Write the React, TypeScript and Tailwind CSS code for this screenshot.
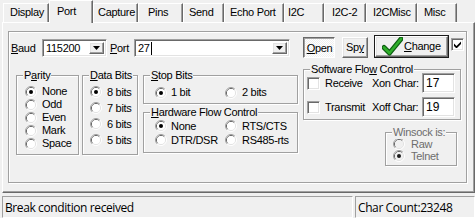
import React from "react";

const ui =
  "font-['Liberation_Sans',Arial,sans-serif] text-[11px] tracking-[-0.3px] leading-[13px] text-black";
const sunken =
  "border border-t-[#a0a0a0] border-l-[#a0a0a0] border-r-white border-b-white shadow-[inset_1px_1px_0_#696969,inset_-1px_-1px_0_#e3e3e3]";
const raised =
  "border border-t-white border-l-white border-r-[#696969] border-b-[#696969] shadow-[inset_-1px_-1px_0_#a0a0a0,inset_1px_1px_0_#e3e3e3] bg-[#f0f0f0]";

function Radio({ checked, disabled }: { checked?: boolean; disabled?: boolean }) {
  return (
    <svg width="12" height="12" viewBox="0 0 12 12" className="shrink-0">
      <path d="M2.11 9.89A5.5 5.5 0 0 1 9.89 2.11" fill="none" stroke="#a0a0a0" />
      <path d="M9.89 2.11A5.5 5.5 0 0 1 2.11 9.89" fill="none" stroke="#ffffff" />
      <path d="M2.82 9.18A4.5 4.5 0 0 1 9.18 2.82" fill="none" stroke="#696969" />
      <path d="M9.18 2.82A4.5 4.5 0 0 1 2.82 9.18" fill="none" stroke="#e3e3e3" />
      <circle cx="6" cy="6" r="4" fill={disabled ? "#f0f0f0" : "#ffffff"} />
      {checked && <circle cx="6" cy="6" r="2" fill={disabled ? "#1a1a1a" : "#000000"} />}
    </svg>
  );
}

function CheckBox({ checked, className = "" }: { checked?: boolean; className?: string }) {
  return (
    <div
      className={`w-[13px] h-[13px] shrink-0 bg-white flex items-center justify-center ${sunken} ${className}`}
    >
      {checked && (
        <svg width="7" height="7" viewBox="0 0 7 7">
          <path d="M0 2.5 L2.5 5 L7 0.5 V3 L2.5 7.5 L0 5 Z" fill="#000" />
        </svg>
      )}
    </div>
  );
}

function Group({
  title,
  className = "",
  children,
}: {
  title?: React.ReactNode;
  className?: string;
  children?: React.ReactNode;
}) {
  return (
    <div
      className={`relative shrink-0 border border-[#a0a0a0] shadow-[inset_1px_1px_0_#ffffff,1px_1px_0_#ffffff] ${className}`}
    >
      {title && (
        <div className="absolute left-[6px] top-[-7px] px-[1px] bg-[#f0f0f0] leading-[13px] whitespace-nowrap">
          {title}
        </div>
      )}
      {children}
    </div>
  );
}

function Combo({ width, value, caret }: { width: string; value: string; caret?: boolean }) {
  return (
    <div className={`${width} h-[18px] mt-[4px] shrink-0 bg-white flex items-stretch p-[2px] ${sunken}`}>
      <div className="flex-1 flex items-center pl-[1px]">
        {value}
        {caret && <span className="inline-block w-[1px] h-[13px] bg-black ml-[1px]" />}
      </div>
      <div className={`w-[15px] flex items-center justify-center ${raised}`}>
        <svg width="7" height="4" viewBox="0 0 7 4">
          <path d="M0 0H7L3.5 4Z" fill="#000" />
        </svg>
      </div>
    </div>
  );
}

function Tick() {
  return (
    <svg width="21" height="19" viewBox="0 0 21 19" className="shrink-0">
      <path
        d="M2 10.5 L7.5 16 L19 2"
        fill="none"
        stroke="#0d5e12"
        strokeWidth="5"
        strokeLinecap="round"
        strokeLinejoin="round"
      />
      <path
        d="M2 10.5 L7.5 16 L19 2"
        fill="none"
        stroke="#2fae2a"
        strokeWidth="2.6"
        strokeLinecap="round"
        strokeLinejoin="round"
      />
    </svg>
  );
}

const tabs = [
  { t: "Display", w: "w-[46px]", pl: "pl-[6px]" },
  { t: "Port", w: "w-[44px]", pl: "pl-[7px]", sel: true },
  { t: "Capture", w: "w-[45px]", pl: "pl-[4px]" },
  { t: "Pins", w: "w-[45px]", pl: "pl-[9px]" },
  { t: "Send", w: "w-[41px]", pl: "pl-[5px]" },
  { t: "Echo Port", w: "w-[60px]", pl: "pl-[5px]" },
  { t: "I2C", w: "w-[40px]", pl: "pl-[3px]" },
  { t: "I2C-2", w: "w-[42px]", pl: "pl-[7px]" },
  { t: "I2CMisc", w: "w-[51px]", pl: "pl-[6px]" },
  { t: "Misc", w: "w-[40px]", pl: "pl-[6px]" },
];

export default function App() {
  return (
    <div className={`w-[475px] h-[218px] bg-[#f0f0f0] overflow-hidden ${ui}`}>
      {/* Tab strip */}
      <div className="relative z-10 flex items-end h-[22px] pl-[3px]">
        {tabs.map((tb) =>
          tb.sel ? (
            <div
              key={tb.t}
              className={`${tb.w} ${tb.pl} h-[23px] mb-[-1px] pt-[4px] shrink-0 bg-[#f0f0f0] border-t border-l border-r border-t-white border-l-white border-r-[#696969] shadow-[inset_-1px_0_0_#a0a0a0] whitespace-nowrap`}
            >
              {tb.t}
            </div>
          ) : (
            <div
              key={tb.t}
              className={`${tb.w} ${tb.pl} h-[19px] pt-[2px] shrink-0 border-t border-l border-r border-t-white border-l-white border-r-[#696969] shadow-[inset_-1px_0_0_#a0a0a0] whitespace-nowrap`}
            >
              {tb.t}
            </div>
          )
        )}
      </div>

      {/* Tab page */}
      <div className="ml-[2px] w-[473px] h-[171px] border border-t-white border-l-white border-r-[#696969] border-b-[#696969] shadow-[inset_-1px_-1px_0_#a0a0a0] pl-[5px] pt-[8px]">
        <div className="w-[459px] h-[152px] border border-[#a0a0a0] shadow-[inset_1px_1px_0_#ffffff,1px_1px_0_#ffffff]">
          {/* Port row */}
          <div className="flex items-start mt-[3px] pl-[2px] h-[23px]">
            <div className="w-[31px] h-[18px] mt-[4px] flex items-center shrink-0">
              <u>B</u>aud
            </div>
            <Combo width="w-[65px]" value="115200" />
            <div className="ml-[3px] w-[24px] h-[18px] mt-[4px] flex items-center shrink-0">
              <u>P</u>ort
            </div>
            <Combo width="w-[156px]" value="27" caret />
            <div className="ml-[13px] mt-[2px] w-[32px] h-[21px] shrink-0 flex items-center justify-center pt-[1px] pl-[1px] border border-t-[#696969] border-l-[#696969] border-r-white border-b-white shadow-[inset_1px_1px_0_#a0a0a0] bg-[repeating-conic-gradient(#ffffff_0_25%,#f0f0f0_0_50%)] bg-[length:2px_2px]">
              <span>
                <u>O</u>pen
              </span>
            </div>
            <div className={`ml-[7px] mt-[2px] w-[26px] h-[21px] shrink-0 flex items-center justify-center ${raised}`}>
              <span>
                Sp<u>y</u>
              </span>
            </div>
            <div className="ml-[6px] w-[75px] h-[23px] shrink-0 border border-[#1a1a1a]">
              <div className={`w-full h-full flex items-center pl-[6px] ${raised}`}>
                <Tick />
                <span className="ml-[1px]">
                  <u>C</u>hange
                </span>
              </div>
            </div>
            <CheckBox checked className="ml-[2px] mt-[3px]" />
          </div>

          {/* Lower area */}
          <div className="flex items-start">
            <Group
              className="ml-[7px] mt-[17px] w-[63px] h-[80px] pt-[9px] pl-[8px]"
              title={
                <>
                  P<u>a</u>rity
                </>
              }
            >
              {["None", "Odd", "Even", "Mark", "Space"].map((t, i) => (
                <div key={t} className="flex items-center h-[13px] gap-[5px]">
                  <Radio checked={i === 0} />
                  {t}
                </div>
              ))}
            </Group>

            <Group
              className="ml-[3px] mt-[17px] w-[56px] h-[80px] pt-[8px] pl-[7px]"
              title={
                <>
                  <u>D</u>ata Bits
                </>
              }
            >
              {["8 bits", "7 bits", "6 bits", "5 bits"].map((t, i) => (
                <div key={t} className="flex items-center h-[16px] gap-[5px]">
                  <Radio checked={i === 0} />
                  {t}
                </div>
              ))}
            </Group>

            <div className="ml-[5px] mt-[17px] flex flex-col shrink-0">
              <Group
                className="w-[155px] h-[29px] pt-[10px] pl-[11px]"
                title={
                  <>
                    <u>S</u>top Bits
                  </>
                }
              >
                <div className="flex items-center h-[13px]">
                  <div className="w-[70px] flex items-center gap-[4px]">
                    <Radio checked />1 bit
                  </div>
                  <div className="flex items-center gap-[5px]">
                    <Radio />2 bits
                  </div>
                </div>
              </Group>
              <Group
                className="mt-[8px] w-[155px] h-[41px] pt-[6px] pl-[11px]"
                title={
                  <>
                    <u>H</u>ardware Flow Control
                  </>
                }
              >
                <div className="flex items-center h-[14px]">
                  <div className="w-[70px] flex items-center gap-[4px]">
                    <Radio checked />
                    None
                  </div>
                  <div className="flex items-center gap-[5px]">
                    <Radio />
                    RTS/CTS
                  </div>
                </div>
                <div className="flex items-center h-[14px]">
                  <div className="w-[70px] flex items-center gap-[4px]">
                    <Radio />
                    DTR/DSR
                  </div>
                  <div className="flex items-center gap-[5px]">
                    <Radio />
                    RS485-rts
                  </div>
                </div>
              </Group>
            </div>

            <div className="ml-[5px] mt-[11px] flex flex-col shrink-0">
              <Group
                className="w-[158px] h-[51px] pt-[1px]"
                title={
                  <>
                    Software Flo<u>w</u> Control
                  </>
                }
              >
                {[
                  { l: "Receive", x: "Xon Char:", v: "17" },
                  { l: "Transmit", x: "Xoff Char:", v: "19" },
                ].map((r) => (
                  <div key={r.l} className="flex items-center h-[24px]">
                    <CheckBox className="ml-[3px]" />
                    <div className="ml-[5px] w-[47px] whitespace-nowrap">{r.l}</div>
                    <div className="w-[50px] whitespace-nowrap">{r.x}</div>
                    <div
                      className={`w-[33px] h-[20px] bg-white flex items-center pl-[3px] text-[12px] tracking-normal ${sunken}`}
                    >
                      {r.v}
                    </div>
                  </div>
                ))}
              </Group>
              <Group
                className="ml-[82px] mt-[12px] w-[72px] h-[34px] pt-[5px] pl-[7px] text-[#6d6d6d]"
                title="Winsock is:"
              >
                <div className="flex items-center h-[12px] gap-[6px]">
                  <Radio disabled />
                  Raw
                </div>
                <div className="flex items-center h-[12px] gap-[6px]">
                  <Radio disabled checked />
                  Telnet
                </div>
              </Group>
            </div>
          </div>
        </div>
      </div>

      {/* Status bar */}
      <div className="flex pt-[3px] h-[25px] font-['Open_Sans',sans-serif] text-[12px] tracking-[-0.4px]">
        <div className="ml-[2px] w-[351px] h-[22px] shrink-0 border border-t-[#a0a0a0] border-l-[#a0a0a0] border-r-white border-b-white flex items-center pl-[2px]">
          Break condition received
        </div>
        <div className="ml-[2px] w-[120px] h-[22px] shrink-0 border border-t-[#a0a0a0] border-l-[#a0a0a0] border-r-white border-b-white flex items-center pl-[2px]">
          Char Count:23248
        </div>
      </div>
    </div>
  );
}
